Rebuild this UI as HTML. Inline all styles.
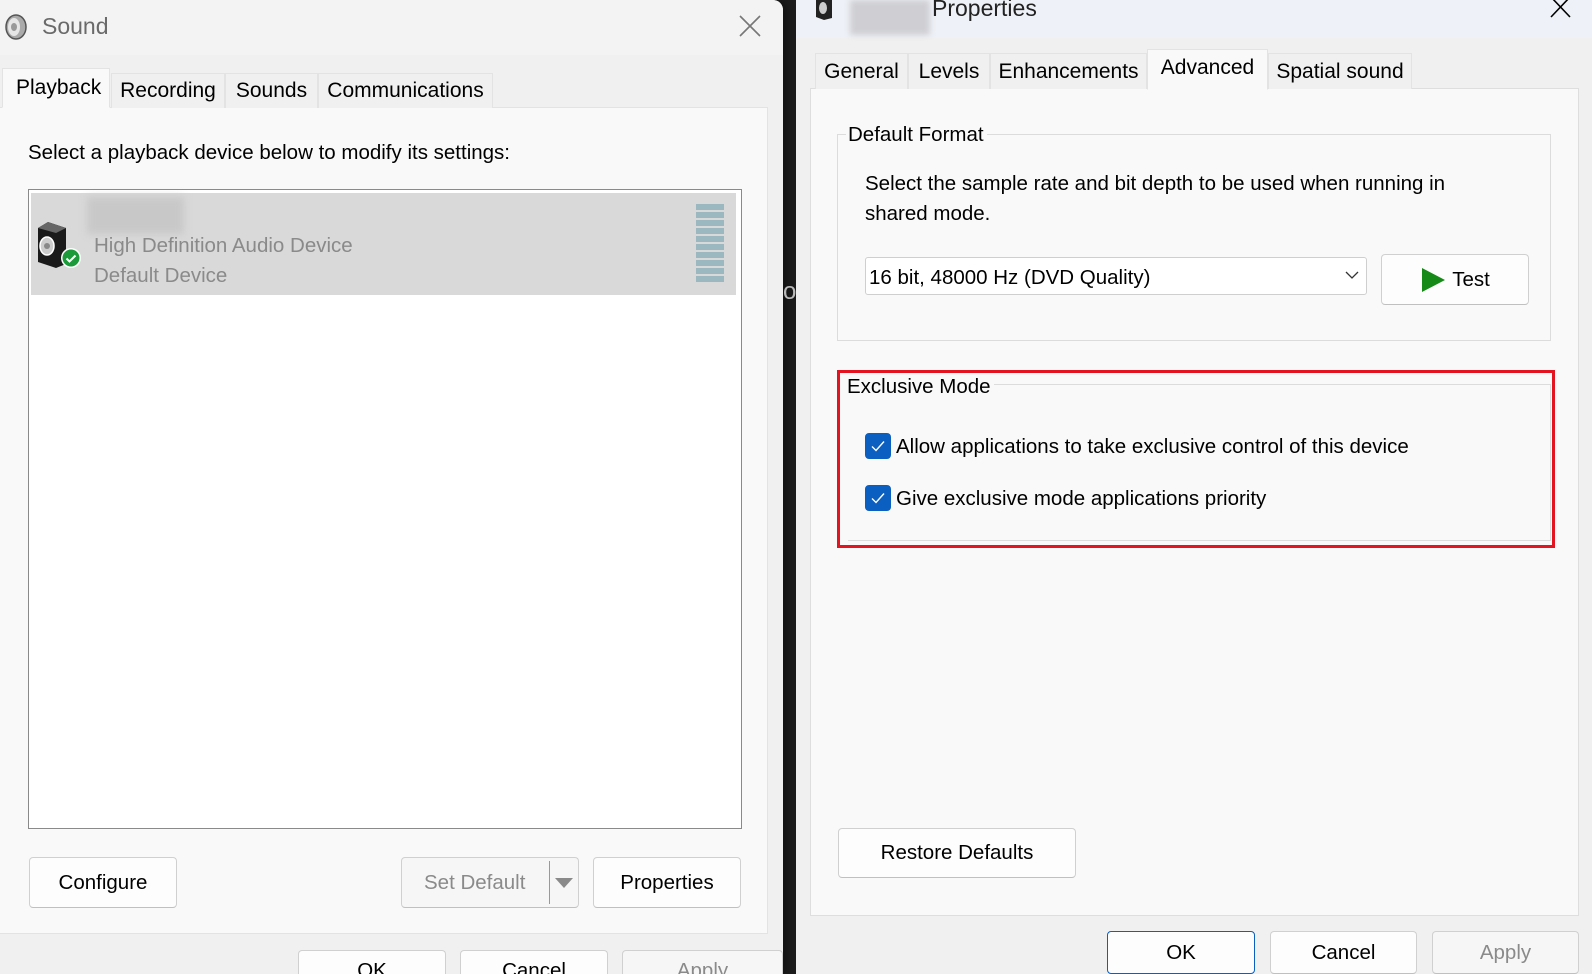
<!DOCTYPE html>
<html><head><meta charset="utf-8"><style>
*{box-sizing:border-box;margin:0;padding:0}
html,body{width:1592px;height:974px;overflow:hidden}
body{background:#1c1c1c;font-family:"Liberation Sans",sans-serif;color:#000;position:relative}
.abs{position:absolute}
.t{position:absolute;white-space:nowrap;font-size:20.5px;line-height:1}
.btn{position:absolute;background:#fdfdfd;border:1px solid #d0d0d0;border-bottom-color:#c0c0c0;border-radius:4px;font-size:20.5px;display:flex;align-items:center;justify-content:center;overflow:hidden}
.tab{position:absolute;border:1px solid #e3e3e3;border-bottom:none;background:#f0f0f0;font-size:21px;display:flex;align-items:center;justify-content:center}
</style></head><body>
<!-- left window -->
<div class="abs" style="left:0;top:0;width:783px;height:974px;background:#f0f0f0;border-radius:0 10px 0 0;box-shadow:4px 0 8px rgba(0,0,0,.35)"></div>
<div class="abs" style="left:0;top:0;width:783px;height:55px;background:#f3f3f3;border-radius:0 10px 0 0"></div>
<svg class="abs" style="left:3px;top:13px" width="26" height="28" viewBox="0 0 26 28"><ellipse cx="13" cy="14" rx="10" ry="12" fill="#aaa" stroke="#555" stroke-width="1.5"/><ellipse cx="11" cy="14" rx="6" ry="9" fill="#e6e6e6"/><ellipse cx="11" cy="14" rx="3" ry="4" fill="#999"/></svg>
<div class="t" style="left:42px;top:15px;font-size:23px;color:#6a6a6a">Sound</div>
<svg class="abs" style="left:739px;top:15px" width="22" height="22"><path d="M1 1L21 21M21 1L1 21" stroke="#777" stroke-width="1.6"/></svg>
<div class="abs" style="left:0;top:107px;width:768px;height:827px;background:#f9f9f9;border:1px solid #e3e3e3;border-left:none"></div>
<div class="tab" style="left:2px;top:68px;width:108px;height:40px;background:#f9f9f9;border-bottom:1px solid #f9f9f9;justify-content:flex-start;padding-left:13px">Playback</div>
<div class="tab" style="left:111px;top:73px;width:114px;height:35px">Recording</div>
<div class="tab" style="left:225px;top:73px;width:93px;height:35px">Sounds</div>
<div class="tab" style="left:318px;top:73px;width:175px;height:35px">Communications</div>
<div class="t" style="left:28px;top:143px">Select a playback device below to modify its settings:</div>
<div class="abs" style="left:28px;top:189px;width:714px;height:640px;background:#fff;border:1px solid #8a8a8a"></div>
<div class="abs" style="left:31px;top:193px;width:705px;height:102px;background:#d9d9d9"></div>
<svg class="abs" style="left:36px;top:220px" width="50" height="52" viewBox="0 0 50 52"><path d="M2 8L12 2L30 8L30 44L20 48L2 42Z" fill="#1a1a1a"/><path d="M12 2L30 8L20 13L2 8Z" fill="#666"/><ellipse cx="11" cy="26" rx="7" ry="9" fill="#ccc" stroke="#fff" stroke-width="1.5"/><circle cx="11" cy="26" r="3" fill="#888"/><circle cx="35" cy="38" r="10" fill="#fff"/><circle cx="35" cy="38" r="8.5" fill="#1b9a3a"/><path d="M30.5 38.5l3 3 6-6" stroke="#fff" stroke-width="2" fill="none"/></svg>
<div class="abs" style="left:87px;top:197px;width:97px;height:37px;background:#c8c8c8;filter:blur(4px)"></div>
<div class="t" style="left:94px;top:236px;color:#8a8a8a">High Definition Audio Device</div>
<div class="t" style="left:94px;top:266px;color:#8a8a8a">Default Device</div>
<div class="abs" style="left:696px;top:204px;width:28px;height:78px;background:repeating-linear-gradient(#9bb8c0 0 6px,#d9d9d9 6px 8px)"></div>
<div class="btn" style="left:29px;top:857px;width:148px;height:51px">Configure</div>
<div class="btn" style="left:401px;top:857px;width:178px;height:51px;background:#f6f6f6;color:#8a8a8a;justify-content:flex-start;padding-left:22px">Set Default<div class="abs" style="left:147px;top:3px;width:1px;height:43px;background:#999"></div><svg class="abs" style="left:153px;top:20px" width="18" height="10"><path d="M0 0H18L9 10Z" fill="#8a8a8a"/></svg></div>
<div class="btn" style="left:593px;top:857px;width:148px;height:51px">Properties</div>
<div class="btn" style="left:298px;top:950px;width:148px;height:24px;align-items:flex-start;padding-top:8px;border-bottom:none;border-radius:4px 4px 0 0">OK</div>
<div class="btn" style="left:460px;top:950px;width:148px;height:24px;align-items:flex-start;padding-top:8px;border-bottom:none;border-radius:4px 4px 0 0">Cancel</div>
<div class="btn" style="left:622px;top:950px;width:161px;height:24px;align-items:flex-start;padding-top:8px;background:#f6f6f6;color:#8a8a8a;border-bottom:none;border-radius:4px 4px 0 0">Apply</div>
<div class="t" style="left:783px;top:280px;color:#bbb;font-size:24px">ot</div>
<!-- right window -->
<div class="abs" style="left:796px;top:0;width:796px;height:974px;background:#f0f0f0"></div>
<div class="abs" style="left:796px;top:0;width:796px;height:38px;background:#eef1f7"></div>
<svg class="abs" style="left:814px;top:0" width="22" height="20"><path d="M2 0H18V18L10 20L2 17Z" fill="#222"/><ellipse cx="9" cy="8" rx="4" ry="6" fill="#ccc"/></svg>
<div class="abs" style="left:850px;top:0;width:80px;height:35px;background:#cfcfd3;filter:blur(3px)"></div>
<div class="t" style="left:932px;top:-3px;font-size:23px;color:#222">Properties</div>
<svg class="abs" style="left:1550px;top:0" width="22" height="18"><path d="M1 -3L20 17M20 -3L1 17" stroke="#000" stroke-width="1.6"/></svg>
<div class="abs" style="left:810px;top:88px;width:769px;height:828px;background:#f9f9f9;border:1px solid #dedede"></div>
<div class="tab" style="left:815px;top:53px;width:93px;height:36px">General</div>
<div class="tab" style="left:908px;top:53px;width:82px;height:36px">Levels</div>
<div class="tab" style="left:990px;top:53px;width:157px;height:36px">Enhancements</div>
<div class="tab" style="left:1147px;top:49px;width:121px;height:41px;background:#f9f9f9;border-bottom:1px solid #f9f9f9;padding-bottom:4px">Advanced</div>
<div class="tab" style="left:1268px;top:53px;width:144px;height:36px">Spatial sound</div>
<div class="abs" style="left:837px;top:134px;width:714px;height:207px;border:1px solid #dcdcdc"></div>
<div class="t" style="left:846px;top:125px;background:#f9f9f9;padding:0 3px 0 2px">Default Format</div>
<div class="t" style="left:865px;top:174px">Select the sample rate and bit depth to be used when running in</div>
<div class="t" style="left:865px;top:204px">shared mode.</div>
<div class="abs" style="left:865px;top:257px;width:502px;height:38px;background:#fff;border:1px solid #cfcfcf;border-radius:3px"></div>
<div class="t" style="left:869px;top:268px">16 bit, 48000 Hz (DVD Quality)</div>
<svg class="abs" style="left:1345px;top:271px" width="14" height="9"><path d="M1 1L7 7L13 1" stroke="#333" stroke-width="1.3" fill="none"/></svg>
<div class="btn" style="left:1381px;top:254px;width:148px;height:51px"><svg width="26" height="26" style="margin-right:6px"><path d="M2 1L25 13L2 25Z" fill="#168a16"/></svg>Test</div>
<div class="abs" style="left:837px;top:370px;width:718px;height:178px;border:3px solid #e3141f"></div>
<div class="abs" style="left:848px;top:384px;width:703px;height:157px;border:1px solid #dcdcdc;border-left:none"></div>
<div class="t" style="left:847px;top:377px;background:#f9f9f9;padding-right:3px">Exclusive Mode</div>
<div class="abs" style="left:865px;top:433px;width:26px;height:26px;background:#0a5fc0;border-radius:4px"></div>
<svg class="abs" style="left:865px;top:433px" width="26" height="26"><path d="M7 13.5l4 4 8-9" stroke="#fff" stroke-width="1.4" fill="none"/></svg>
<div class="t" style="left:896px;top:437px">Allow applications to take exclusive control of this device</div>
<div class="abs" style="left:865px;top:485px;width:26px;height:26px;background:#0a5fc0;border-radius:4px"></div>
<svg class="abs" style="left:865px;top:485px" width="26" height="26"><path d="M7 13.5l4 4 8-9" stroke="#fff" stroke-width="1.4" fill="none"/></svg>
<div class="t" style="left:896px;top:489px">Give exclusive mode applications priority</div>
<div class="btn" style="left:838px;top:828px;width:238px;height:50px">Restore Defaults</div>
<div class="btn" style="left:1107px;top:931px;width:148px;height:43px;border-color:#0a5fc0;align-items:flex-start;padding-top:9px">OK</div>
<div class="btn" style="left:1270px;top:931px;width:147px;height:43px;align-items:flex-start;padding-top:9px">Cancel</div>
<div class="btn" style="left:1432px;top:931px;width:147px;height:43px;align-items:flex-start;padding-top:9px;background:#f6f6f6;color:#8a8a8a">Apply</div>
</body></html>
